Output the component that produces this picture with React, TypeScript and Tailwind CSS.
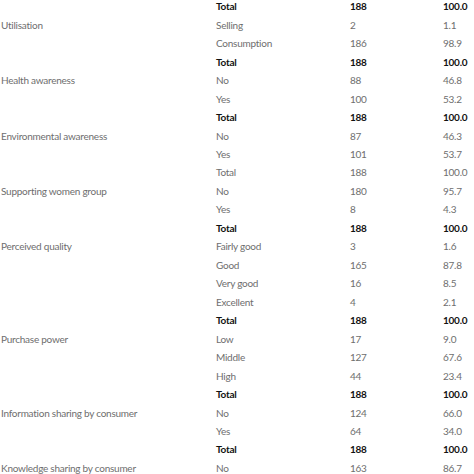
type Row = {
  label?: string;
  category: string;
  n: string;
  pct: string;
  bold?: boolean;
};

const rows: Row[] = [
  { category: "Total", n: "188", pct: "100.0", bold: true },
  { label: "Utilisation", category: "Selling", n: "2", pct: "1.1" },
  { category: "Consumption", n: "186", pct: "98.9" },
  { category: "Total", n: "188", pct: "100.0", bold: true },
  { label: "Health awareness", category: "No", n: "88", pct: "46.8" },
  { category: "Yes", n: "100", pct: "53.2" },
  { category: "Total", n: "188", pct: "100.0", bold: true },
  { label: "Environmental awareness", category: "No", n: "87", pct: "46.3" },
  { category: "Yes", n: "101", pct: "53.7" },
  { category: "Total", n: "188", pct: "100.0" },
  { label: "Supporting women group", category: "No", n: "180", pct: "95.7" },
  { category: "Yes", n: "8", pct: "4.3" },
  { category: "Total", n: "188", pct: "100.0", bold: true },
  { label: "Perceived quality", category: "Fairly good", n: "3", pct: "1.6" },
  { category: "Good", n: "165", pct: "87.8" },
  { category: "Very good", n: "16", pct: "8.5" },
  { category: "Excellent", n: "4", pct: "2.1" },
  { category: "Total", n: "188", pct: "100.0", bold: true },
  { label: "Purchase power", category: "Low", n: "17", pct: "9.0" },
  { category: "Middle", n: "127", pct: "67.6" },
  { category: "High", n: "44", pct: "23.4" },
  { category: "Total", n: "188", pct: "100.0", bold: true },
  { label: "Information sharing by consumer", category: "No", n: "124", pct: "66.0" },
  { category: "Yes", n: "64", pct: "34.0" },
  { category: "Total", n: "188", pct: "100.0", bold: true },
  { label: "Knowledge sharing by consumer", category: "No", n: "163", pct: "86.7" },
];

export default function App() {
  return (
    <div className="h-[474px] w-[474px] overflow-hidden bg-white font-['Lato',sans-serif] text-[10px] tracking-[-0.25px]">
      <div className="-mt-[3px] flex flex-col">
        {rows.map((row, i) => {
          const cellTone = row.bold ? "font-bold text-[#111]" : "text-[#6e6e6e]";
          return (
            <div key={i} className="grid h-[18.47px] grid-cols-[216px_134px_93px_1fr] items-center leading-none">
              <span className="pl-[1px] text-[#6e6e6e]">{row.label ?? ""}</span>
              <span className={cellTone}>{row.category}</span>
              <span className={cellTone}>{row.n}</span>
              <span className={cellTone}>{row.pct}</span>
            </div>
          );
        })}
      </div>
    </div>
  );
}
